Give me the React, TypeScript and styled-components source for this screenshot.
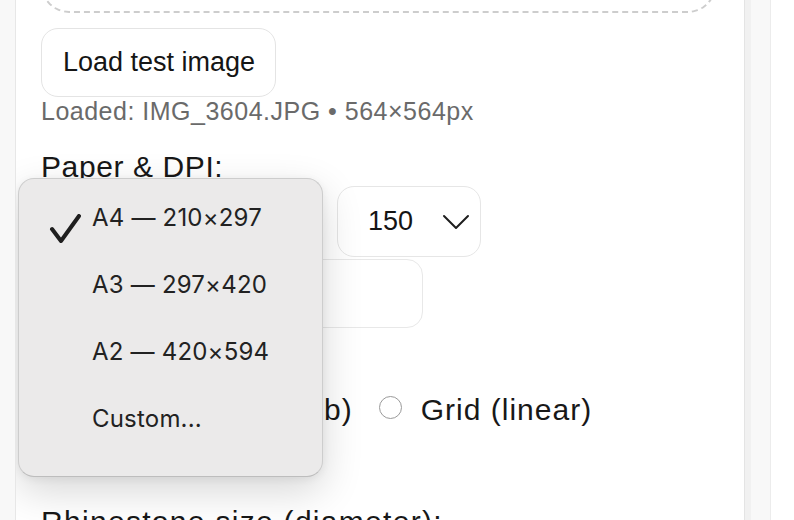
import React from "react";
import styled, { createGlobalStyle } from "styled-components";

const Global = createGlobalStyle`
  html, body { margin: 0; padding: 0; background: #ffffff; }
  body { font-family: "Liberation Sans", Arial, sans-serif; color: #1b1b1b; overflow: hidden; }
  #root { height: 520px; }
`;

const Page = styled.div`
  display: flex;
  width: 794px;
  height: 520px;
  overflow: hidden;
`;

const Gutter = styled.div`
  width: 15px;
  flex: none;
  background: #f8f8f8;
  border-right: 1px solid #e7e7e7;
`;

const Panel = styled.div`
  position: relative;
  flex: 1;
  background: #ffffff;
  overflow: hidden;
`;

const Track = styled.div`
  width: 25px;
  flex: none;
  background: linear-gradient(to right, #f1f1f1 0, #f1f1f1 6px, #f8f8f8 6px);
  border-left: 1px solid #e4e4e4;
  border-right: 1px solid #ececec;
`;

const RightSpace = styled.div`
  width: 23px;
  flex: none;
  background: #ffffff;
`;

const Content = styled.div`
  display: flex;
  flex-direction: column;
  align-items: flex-start;
  padding: 0 28px 0 25px;
  margin-top: -117px;
`;

const DropZone = styled.div`
  align-self: stretch;
  height: 130px;
  box-sizing: border-box;
  border: 2px dashed #cdcdcd;
  border-radius: 28px;
`;

const Button = styled.button`
  margin-top: 15px;
  width: 235px;
  height: 69px;
  box-sizing: border-box;
  padding: 0 0 0 21px;
  text-align: left;
  background: #ffffff;
  border: 1px solid #e4e4e4;
  border-radius: 17px;
  font-family: "Liberation Sans", Arial, sans-serif;
  font-size: 27px;
  color: #151515;
`;

const Meta = styled.div`
  margin-top: 2px;
  font-size: 25px;
  line-height: 25px;
  letter-spacing: 0.5px;
  color: #6a6a6a;
`;

const Label = styled.div<{ $gap: number; $spacing?: number }>`
  margin-top: ${(p) => p.$gap}px;
  font-size: 30px;
  line-height: 34px;
  letter-spacing: ${(p) => p.$spacing ?? 0.6}px;
  color: #181818;
`;

const SelectRow = styled.div`
  display: flex;
  gap: 18px;
  margin-top: 2px;
`;

const SelectBox = styled.div<{ $w: number }>`
  width: ${(p) => p.$w}px;
  height: 71px;
  box-sizing: border-box;
  display: flex;
  align-items: center;
  justify-content: space-between;
  padding: 0 10px 0 30px;
  border: 1px solid #e6e6e6;
  border-radius: 17px;
  background: #ffffff;
  font-size: 27px;
  color: #151515;
`;

const InputBox = styled.div`
  margin-top: 2px;
  width: 382px;
  height: 69px;
  box-sizing: border-box;
  border: 1px solid #e8e8e8;
  border-radius: 16px;
  background: #ffffff;
`;

const RadioRow = styled.div`
  display: flex;
  align-items: flex-start;
  margin-top: 17px;
  padding-left: 18px;
  font-size: 30px;
  line-height: 34px;
  color: #181818;
`;

const RadioOption = styled.label<{ $gap: number }>`
  display: flex;
  align-items: flex-start;
  gap: 19px;
  margin-right: ${(p) => p.$gap}px;
  letter-spacing: 1px;
`;

const RadioDot = styled.span`
  width: 23px;
  height: 23px;
  margin-top: 3px;
  box-sizing: border-box;
  border-radius: 50%;
  border: 1.5px solid #9a9a9a;
  background: #ffffff;
  flex: none;
`;

const Menu = styled.div`
  position: absolute;
  left: 2px;
  top: 178px;
  width: 305px;
  height: 299px;
  box-sizing: border-box;
  padding: 5px 0 0 0;
  background: #ebeaea;
  border: 1px solid #cdcdcd;
  border-bottom-color: #bdbdbd;
  border-radius: 16px;
  box-shadow: 0 14px 40px rgba(0, 0, 0, 0.16), 0 2px 8px rgba(0, 0, 0, 0.06);
`;

const MenuItem = styled.div`
  position: relative;
  height: 67px;
  display: flex;
  align-items: center;
  padding-left: 73px;
  font-family: Inter, "Liberation Sans", sans-serif;
  font-size: 24px;
  letter-spacing: 0.2px;
  color: #222222;
`;

const Check = styled.svg`
  position: absolute;
  left: 30px;
  top: 30px;
  width: 32px;
  height: 30px;
`;

const Chevron = () => (
  <svg width="28" height="18" viewBox="0 0 28 18" fill="none">
    <polyline points="2,3 14,15 26,3" stroke="#1e1e1e" strokeWidth="2" strokeLinecap="round" strokeLinejoin="round" />
  </svg>
);

const items = ["A4 — 210×297", "A3 — 297×420", "A2 — 420×594", "Custom..."];

export default function App() {
  return (
    <>
      <Global />
      <Page>
        <Gutter />
        <Panel>
          <Content>
            <DropZone />
            <Button>Load test image</Button>
            <Meta>Loaded: IMG_3604.JPG • 564×564px</Meta>
            <Label $gap={26}>Paper &amp; DPI:</Label>
            <SelectRow>
              <SelectBox $w={278}>
                A4 — 210×297
                <Chevron />
              </SelectBox>
              <SelectBox $w={144}>
                150
                <Chevron />
              </SelectBox>
            </SelectRow>
            <InputBox />
            <Label $gap={14}>Layout:</Label>
            <RadioRow>
              <RadioOption $gap={26}>
                <RadioDot />
                Hex (honeycomb)
              </RadioOption>
              <RadioOption $gap={0}>
                <RadioDot />
                Grid (linear)
              </RadioOption>
            </RadioRow>
            <Label $gap={78} $spacing={1.3}>Rhinestone size (diameter):</Label>
          </Content>
          <Menu>
            {items.map((t, i) => (
              <MenuItem key={t}>
                {i === 0 && (
                  <Check viewBox="0 0 32 30" fill="none">
                    <polyline points="3,15 12,27 30,2" stroke="#1f1f1f" strokeWidth="4" strokeLinecap="round" strokeLinejoin="round" />
                  </Check>
                )}
                {t}
              </MenuItem>
            ))}
          </Menu>
        </Panel>
        <Track />
        <RightSpace />
      </Page>
    </>
  );
}
